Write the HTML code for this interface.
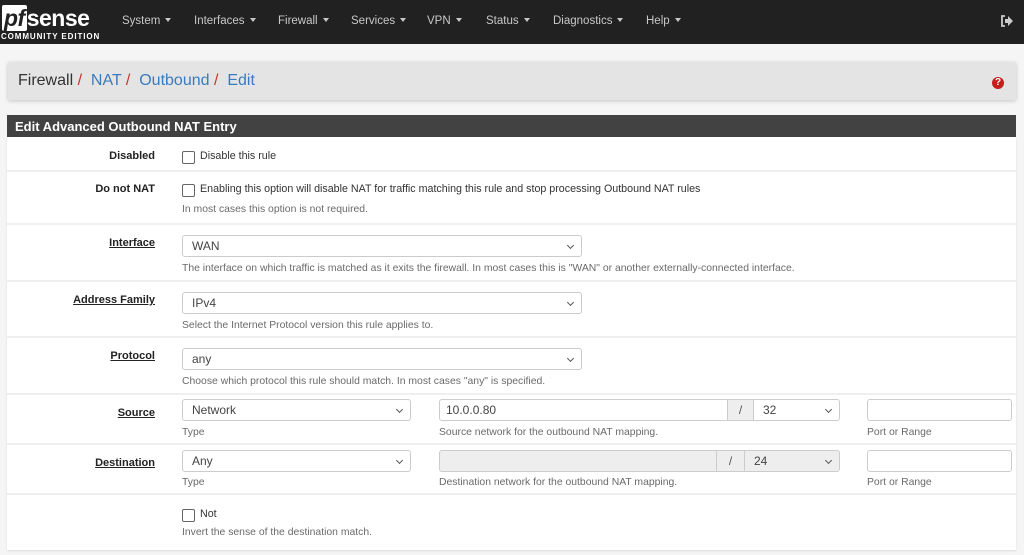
<!DOCTYPE html>
<html><head><meta charset="utf-8"><style>
*{box-sizing:border-box;margin:0;padding:0}
body{width:1024px;height:555px;background:#f5f5f5;font-family:"Liberation Sans",sans-serif;position:relative;overflow:hidden;color:#333}
.a{position:absolute}
.nav{left:0;top:0;width:1024px;height:44px;background:#212121}
.ni{color:#c8c8c8;font-size:11.5px;top:15px}
.car{display:inline-block;width:0;height:0;border-left:3.5px solid transparent;border-right:3.5px solid transparent;border-top:4px solid #c8c8c8;margin-left:5px;vertical-align:2px}
.bc{left:8px;top:62px;width:1008px;height:38px;background:#e4e4e4;box-shadow:0 1px 4px rgba(0,0,0,.2);border-radius:2px}
.ph{left:7px;top:115px;width:1009px;height:22px;background:#424242;color:#fff;font-weight:bold;font-size:13px;padding:4px 8px}
.pb{left:7px;top:137px;width:1009px;height:413px;background:#fff;box-shadow:0 1px 2px rgba(0,0,0,.1)}
.hr{left:7px;width:1009px;height:2px;background:#efefef}
.lb{right:869px;font-size:11px;font-weight:bold;color:#222}
.u{text-decoration:underline}
.cb{width:13px;height:13px;border:1.5px solid #666;border-radius:2px;background:#fff}
.t{font-size:10.7px;color:#333}
.h{font-size:10.4px;color:#6a6a6a}
.sel,.inp{height:22px;border:1px solid #ccc;border-radius:3px;background:#fff;font-size:12px;color:#444;padding:3px 9px}
.sel:after{content:"";position:absolute;right:8px;top:7px;width:4px;height:4px;border-right:1.5px solid #555;border-bottom:1.5px solid #555;transform:rotate(45deg)}
.dis{background:#eee}
.sl{height:22px;border:1px solid #ccc;background:#eee;font-size:12px;color:#555;text-align:center;padding-top:3px}
</style></head><body>
<div class="a nav"></div>
<div class="a" style="left:2px;top:5px;font-size:23px;font-weight:bold;color:#fff;letter-spacing:-0.5px"><span style="font-style:italic;background:#fff;color:#212121;padding:0 2px;border-radius:2px">pf</span>sense</div>
<div class="a" style="left:1px;top:32px;font-size:8px;font-weight:bold;color:#fff;letter-spacing:0.9px">COMMUNITY EDITION</div>
<div class="a ni" style="left:122px">System<span class="car"></span></div>
<div class="a ni" style="left:194px">Interfaces<span class="car"></span></div>
<div class="a ni" style="left:278px">Firewall<span class="car"></span></div>
<div class="a ni" style="left:351px">Services<span class="car"></span></div>
<div class="a ni" style="left:427px">VPN<span class="car"></span></div>
<div class="a ni" style="left:486px">Status<span class="car"></span></div>
<div class="a ni" style="left:553px">Diagnostics<span class="car"></span></div>
<div class="a ni" style="left:646px">Help<span class="car"></span></div>
<svg class="a" style="left:1000px;top:15px" width="13" height="12" viewBox="0 0 13 12"><path d="M5 1H2v10h3" fill="none" stroke="#ccc" stroke-width="1.8"/><path d="M5 4h3V1l5 5-5 5V8H5z" fill="#ccc"/></svg>
<div class="a bc"></div>
<div class="a" style="left:18px;top:72px;font-size:16px;color:#333">Firewall <span style="color:#c0392b">/</span>&nbsp; <span style="color:#3a7bbf">NAT</span> <span style="color:#c0392b">/</span>&nbsp; <span style="color:#3a7bbf">Outbound</span> <span style="color:#c0392b">/</span>&nbsp; <span style="color:#3a7bbf">Edit</span></div>
<div class="a" style="left:992px;top:77px;width:12px;height:12px;border-radius:50%;background:#c81d1d;color:#fff;font-size:10px;font-weight:bold;text-align:center;line-height:12px">?</div>
<div class="a ph">Edit Advanced Outbound NAT Entry</div>
<div class="a pb"></div>
<div class="a hr" style="top:170px"></div>
<div class="a hr" style="top:223px"></div>
<div class="a hr" style="top:280px"></div>
<div class="a hr" style="top:336px"></div>
<div class="a hr" style="top:393px"></div>
<div class="a hr" style="top:443px"></div>
<div class="a hr" style="top:493px"></div>

<div class="a lb" style="top:150px">Disabled</div>
<div class="a cb" style="left:182px;top:151px"></div>
<div class="a t" style="left:200px;top:150px">Disable this rule</div>

<div class="a lb" style="top:183px">Do not NAT</div>
<div class="a cb" style="left:182px;top:184px"></div>
<div class="a t" style="left:200px;top:183px">Enabling this option will disable NAT for traffic matching this rule and stop processing Outbound NAT rules</div>
<div class="a h" style="left:182px;top:204px">In most cases this option is not required.</div>

<div class="a lb u" style="top:237px">Interface</div>
<div class="a sel" style="left:182px;top:235px;width:400px">WAN</div>
<div class="a h" style="left:182px;top:263px">The interface on which traffic is matched as it exits the firewall. In most cases this is "WAN" or another externally-connected interface.</div>

<div class="a lb u" style="top:294px">Address Family</div>
<div class="a sel" style="left:182px;top:292px;width:400px">IPv4</div>
<div class="a h" style="left:182px;top:320px">Select the Internet Protocol version this rule applies to.</div>

<div class="a lb u" style="top:350px">Protocol</div>
<div class="a sel" style="left:182px;top:348px;width:400px">any</div>
<div class="a h" style="left:182px;top:376px">Choose which protocol this rule should match. In most cases "any" is specified.</div>

<div class="a lb u" style="top:407px">Source</div>
<div class="a sel" style="left:182px;top:399px;width:229px">Network</div>
<div class="a h" style="left:182px;top:427px">Type</div>
<div class="a inp" style="left:439px;top:399px;width:289px;border-radius:3px 0 0 3px;padding-left:6px">10.0.0.80</div>
<div class="a sl" style="left:727px;top:399px;width:27px">/</div>
<div class="a sel" style="left:753px;top:399px;width:87px;border-radius:0 3px 3px 0">32</div>
<div class="a h" style="left:439px;top:427px">Source network for the outbound NAT mapping.</div>
<div class="a inp" style="left:867px;top:399px;width:145px"></div>
<div class="a h" style="left:867px;top:427px">Port or Range</div>

<div class="a lb u" style="top:457px">Destination</div>
<div class="a sel" style="left:182px;top:450px;width:229px">Any</div>
<div class="a h" style="left:182px;top:477px">Type</div>
<div class="a inp dis" style="left:439px;top:450px;width:278px;border-radius:3px 0 0 3px"></div>
<div class="a sl" style="left:716px;top:450px;width:29px">/</div>
<div class="a sel dis" style="left:744px;top:450px;width:96px;border-radius:0 3px 3px 0">24</div>
<div class="a h" style="left:439px;top:477px">Destination network for the outbound NAT mapping.</div>
<div class="a inp" style="left:867px;top:450px;width:145px"></div>
<div class="a h" style="left:867px;top:477px">Port or Range</div>

<div class="a cb" style="left:182px;top:509px"></div>
<div class="a t" style="left:200px;top:508px">Not</div>
<div class="a h" style="left:182px;top:527px">Invert the sense of the destination match.</div>
</body></html>
